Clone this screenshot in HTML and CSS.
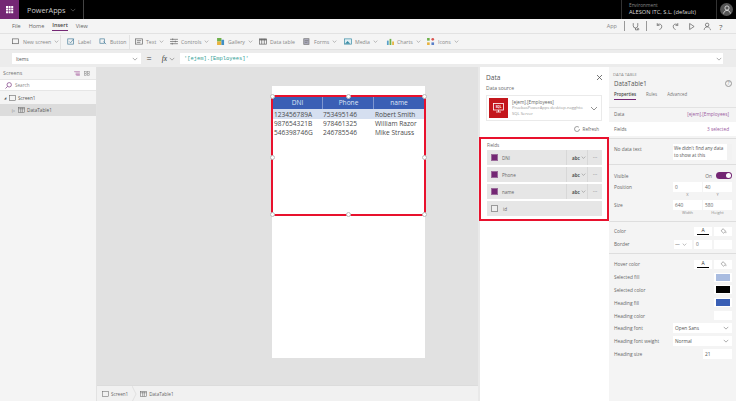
FILE: index.html
```html
<!DOCTYPE html>
<html lang="en">
<head>
<meta charset="utf-8">
<title>PowerApps</title>
<link rel="stylesheet" href="styles.css">
</head>
<body>
<svg width="0" height="0" class="defs"><defs>
<symbol id="chev" viewBox="0 0 8 5"><path d="M1 1l3 3 3-3" fill="none" stroke="currentColor" stroke-width=".8"/></symbol>
<symbol id="bucket" viewBox="0 0 8 7"><path d="M3.500 .8L6.500 3.800 4 6 1.200 3.300zM6.800 4.500v1.500" fill="none" stroke="#777" stroke-width=".7"/></symbol>
</defs></svg>
<div class="app">
  <header class="topbar">
    <div class="waffle"><svg width="9" height="9" viewBox="0 0 9 9" fill="#fff"><path d="M1 1h2v2H1zM3.600 1h2v2h-2zM6.200 1h2v2h-2zM1 3.600h2v2H1zM3.600 3.600h2v2h-2zM6.200 3.600h2v2h-2zM1 6.200h2v2H1zM3.600 6.200h2v2h-2zM6.200 6.200h2v2h-2z"/></svg></div>
    <div class="brand">PowerApps<svg class="chev"><use href="#chev"/></svg></div>
    <div class="env">
      <div class="env-label">Environment</div>
      <div class="env-name">ALESON ITC, S.L. (default)</div>
    </div>
    <div class="account"><div class="avatar"><svg width="8" height="9" viewBox="0 0 8 9" fill="none" stroke="#ddd" stroke-width=".9"><circle cx="4" cy="3" r="2.100"/><path d="M.6 8.600C1 6.400 2.400 5.400 4 5.400s3 1 3.400 3.200"/></svg></div></div>
  </header>

  <nav class="menubar">
    <span class="menu">File</span><span class="menu">Home</span><span class="menu active">Insert</span><span class="menu">View</span>
    <span class="spacer"></span>
    <span class="app-label">App</span>
    <span class="vsep"></span>
    <svg class="tool tool-first" viewBox="0 0 12 12" fill="none" stroke="#555" stroke-width=".9"><path d="M3 1.500v3.500a3 3 0 0 0 6 0V1.500M6 8v2.500h3"/><circle cx="9.500" cy="9.500" r="1"/></svg>
    <span class="vsep"></span>
    <svg class="tool" viewBox="0 0 12 12" fill="none" stroke="#555" stroke-width=".9"><path d="M3 1.500v3h3M3 4.500C4 3 5.500 2.500 7 3c2 .8 2.600 3 1.500 5L6 10.500"/></svg>
    <svg class="tool" viewBox="0 0 12 12" fill="none" stroke="#555" stroke-width=".9"><path d="M9 1.500v3H6M9 4.500C8 3 6.500 2.500 5 3c-2 .8-2.600 3-1.500 5L6 10.500"/></svg>
    <svg class="tool" viewBox="0 0 12 12" fill="none" stroke="#555" stroke-width=".9"><path d="M3.500 2l6 4-6 4z"/></svg>
    <svg class="tool" viewBox="0 0 12 12" fill="none" stroke="#555" stroke-width=".9"><circle cx="5.500" cy="3.800" r="2.300"/><path d="M1.500 10.500c.3-2.500 2-4 4-4s3 .8 3.600 2M9 9.500l1.500 1"/></svg>
    <span class="tool help-glyph">?</span>
  </nav>

  <div class="ribbon">
    <div class="rb rb-new"><svg class="ic" viewBox="0 0 9 8" fill="none" stroke="#666" stroke-width=".8"><rect x=".5" y="1" width="7" height="5.500"/></svg>New screen<svg class="chev"><use href="#chev"/></svg></div>
    <span class="rb-sep"></span>
    <div class="rb rb-label"><svg class="ic" viewBox="0 0 9 8" fill="none" stroke="#4a7f9c" stroke-width=".8"><rect x=".8" y="1" width="6.500" height="6"/><path d="M2.500 4l1.500 1.500L7.500 1"/></svg>Label</div>
    <div class="rb rb-button"><svg class="ic" viewBox="0 0 9 8" fill="none" stroke="#4a7f9c" stroke-width=".8"><rect x="1" y="1" width="5" height="5"/><path d="M5 4l3 3"/></svg>Button</div>
    <span class="rb-sep"></span>
    <div class="rb rb-text"><svg class="ic" viewBox="0 0 9 8" fill="none" stroke="#666" stroke-width=".8"><rect x=".5" y="1" width="8" height="6"/><path d="M2 3h5M2 5h4"/></svg>Text<svg class="chev"><use href="#chev"/></svg></div>
    <div class="rb rb-controls"><svg class="ic" viewBox="0 0 9 8" fill="none" stroke="#666" stroke-width=".8"><path d="M0 1.500h9M0 4h9M0 6.500h9M3 .5v2M6 3v2M2.500 5.500v2"/></svg>Controls<svg class="chev"><use href="#chev"/></svg></div>
    <div class="rb rb-gallery"><svg class="ic" viewBox="0 0 9 8"><path fill="#6fb04a" d="M0 0h5v4H0z"/><path fill="#e8b23c" d="M0 4h5v4H0z"/><path fill="#3f8fc4" d="M5 2h3v6H5z"/></svg>Gallery<svg class="chev"><use href="#chev"/></svg></div>
    <div class="rb rb-table"><svg class="ic" viewBox="0 0 9 8" fill="none" stroke="#666" stroke-width=".8"><rect x=".5" y="1" width="8" height="6"/><path d="M3 1v6M6 1v6" /><path d="M.5 2h8" stroke-width="1.400"/></svg>Data table</div>
    <div class="rb rb-forms"><svg class="ic" viewBox="0 0 9 8" fill="none" stroke="#777" stroke-width=".8"><rect x=".8" y=".8" width="6" height="6.500" fill="#aab"/><path d="M2 3h4M2 5h3"/></svg>Forms<svg class="chev"><use href="#chev"/></svg></div>
    <div class="rb rb-media"><svg class="ic" viewBox="0 0 9 8"><rect x=".5" y="1" width="8" height="6" fill="#dfeef3" stroke="#3a8ca5" stroke-width=".8"/><path d="M1 6.500l3-3 3 3z" fill="#3a8ca5"/></svg>Media<svg class="chev"><use href="#chev"/></svg></div>
    <div class="rb rb-charts"><svg class="ic" viewBox="0 0 9 8"><path fill="#5aa0c8" d="M1 3h2v5H1z"/><path fill="#6fb04a" d="M4 1h2v7H4z"/><path fill="#e8b23c" d="M7 4h2v4H7z"/></svg>Charts<svg class="chev"><use href="#chev"/></svg></div>
    <div class="rb rb-icons"><svg class="ic" viewBox="0 0 9 8"><path fill="#6fb04a" d="M0 0h3v3H0z"/><circle cx="6.500" cy="1.500" r="1.500" fill="#d9534f"/><path fill="#e8b23c" d="M0 5h3v3H0z"/><path fill="#5a7fc8" d="M5 5h3v3H5z"/></svg>Icons<svg class="chev"><use href="#chev"/></svg></div>
  </div>

  <div class="formula">
    <div class="prop-select">Items<svg class="chev"><use href="#chev"/></svg></div>
    <div class="equals">=</div>
    <div class="fx"><i>fx</i><svg class="chev"><use href="#chev"/></svg></div>
    <div class="expr"><code>'[ejem].[Employees]'</code><svg class="chev"><use href="#chev"/></svg></div>
  </div>

  <div class="workspace">
    <aside class="tree">
      <div class="tree-head"><span>Screens</span><svg class="tree-ic" viewBox="0 0 8 7" fill="none" stroke="#a45a9c" stroke-width=".9"><path d="M0 1h8M2 3h6M2 5h6M3 6.700h5"/></svg><svg class="tree-ic" viewBox="0 0 8 7" fill="none" stroke="#888" stroke-width=".7"><rect x=".5" y=".5" width="3" height="2.500"/><rect x="4.500" y=".5" width="3" height="2.500"/><rect x=".5" y="4" width="3" height="2.500"/><rect x="4.500" y="4" width="3" height="2.500"/></svg></div>
      <div class="search"><svg width="7" height="7" viewBox="0 0 7 7" fill="none" stroke="#8a4f90" stroke-width=".8"><circle cx="4.200" cy="2.800" r="2.200"/><path d="M2.600 4.400L.5 6.500"/></svg>Search</div>
      <div class="node node-screen"><span class="tri">◢</span><svg class="node-ic" viewBox="0 0 8 6" fill="none" stroke="#555" stroke-width=".6"><rect x=".4" y=".4" width="7" height="5.200"/></svg>Screen1</div>
      <div class="node node-table"><span class="tri2">▷</span><svg class="node-ic" viewBox="0 0 8 6" fill="none" stroke="#666" stroke-width=".6"><rect x=".4" y=".4" width="7" height="5.200"/><path d="M3 .4v5.200M5 .4v5.200M.4 1.600h7"/></svg>DataTable1</div>
    </aside>

    <div class="center">
      <main class="canvas">
        <div class="phone">
          <div class="selection">
            <span class="h h-tl"></span><span class="h h-tc"></span><span class="h h-tr"></span>
            <span class="h h-ml"></span><span class="h h-mr"></span>
            <span class="h h-bl"></span><span class="h h-bc"></span><span class="h h-br"></span>
            <div class="tbl-row tbl-head"><span>DNI</span><span>Phone</span><span>name</span></div>
            <div class="tbl-row tbl-sel"><span>123456789A</span><span>753495146</span><span>Robert Smith</span></div>
            <div class="tbl-row"><span>987654321B</span><span>978461325</span><span>William Razor</span></div>
            <div class="tbl-row"><span>546398746G</span><span>246785546</span><span>Mike Strauss</span></div>
          </div>
        </div>
      </main>
      <footer class="crumbs">
        <svg class="crumb-ic" viewBox="0 0 8 6" fill="none" stroke="#666" stroke-width=".6"><rect x=".4" y=".4" width="7" height="5.200"/></svg><span>Screen1</span>
        <svg class="crumb-arrow" viewBox="0 0 5 16" fill="none" stroke="#ddd" stroke-width=".8"><path d="M0 0l4 8-4 8"/></svg>
        <svg class="crumb-ic" viewBox="0 0 8 6" fill="none" stroke="#666" stroke-width=".6"><rect x=".4" y=".4" width="7" height="5.200"/><path d="M3 .4v5.200M5 .4v5.200M.4 1.600h7"/></svg><span>DataTable1</span>
      </footer>
    </div>

    <section class="data">
      <div class="data-title"><span>Data</span><svg width="7" height="7" viewBox="0 0 7 7" stroke="#555" stroke-width=".8"><path d="M1 1l5 5M6 1L1 6"/></svg></div>
      <div class="data-sub">Data source</div>
      <div class="source">
        <div class="source-ic"><svg width="11" height="10" viewBox="0 0 11 10" fill="none" stroke="#fff" stroke-width=".8"><rect x=".5" y=".5" width="10" height="6.500"/><path d="M3 9h5M5.500 7v2"/><text x="5.500" y="5" text-anchor="middle" class="sql">SQL</text></svg></div>
        <div class="source-text"><div>[ejem].[Employees]</div><div class="muted">PruebasPowerApps desktop-nagghto</div><div class="muted">SQL Server</div></div>
        <svg class="chev big"><use href="#chev"/></svg>
      </div>
      <div class="refresh"><svg width="6" height="6" viewBox="0 0 6 6" fill="none" stroke="#666" stroke-width=".6"><path d="M5.500 3A2.500 2.500 0 1 1 3 .5c1 0 1.600.5 2 1"/></svg>Refresh</div>
      <div class="fields">
        <div class="fields-label">Fields</div>
        <div class="field"><span class="check on"></span><span class="fname">DNI</span><span class="ftype">abc<svg class="chev"><use href="#chev"/></svg></span><span class="fmore">···</span></div>
        <div class="field"><span class="check on"></span><span class="fname">Phone</span><span class="ftype">abc<svg class="chev"><use href="#chev"/></svg></span><span class="fmore">···</span></div>
        <div class="field"><span class="check on"></span><span class="fname">name</span><span class="ftype">abc<svg class="chev"><use href="#chev"/></svg></span><span class="fmore">···</span></div>
        <div class="field"><span class="check"></span><span class="fname">id</span></div>
      </div>
    </section>

    <aside class="props">
      <div class="props-head">
        <div class="kind">DATA TABLE</div>
        <div class="ctl-name"><span>DataTable1</span><span class="help">?</span></div>
        <div class="tabs"><span class="tab active">Properties</span><span class="tab">Rules</span><span class="tab">Advanced</span></div>
      </div>
      <div class="link-row"><span>Data</span><span class="val">[ejem].[Employees]</span></div>
      <div class="link-row white"><span>Fields</span><span class="val">3 selected</span></div>

      <div class="group g-nodata">
        <div class="p-row"><span class="p-name">No data text</span><div class="textarea"><span>We didn't find any data to show at this</span><i class="scroll"></i></div></div>
      </div>
      <div class="group g-layout">
        <div class="p-row r-visible"><span class="p-name">Visible</span><span class="on">On</span><span class="toggle"></span></div>
        <div class="p-row r-pos"><span class="p-name">Position</span><div class="pair"><div class="num">0<small>X</small></div><div class="num">40<small>Y</small></div></div></div>
        <div class="p-row r-size"><span class="p-name">Size</span><div class="pair"><div class="num">640<small>Width</small></div><div class="num">580<small>Height</small></div></div></div>
      </div>
      <div class="group g-color">
        <div class="p-row"><span class="p-name">Color</span><div class="swatches"><span class="sw"><b class="a">A</b></span><span class="sw"><svg class="bucket"><use href="#bucket"/></svg></span></div></div>
        <div class="p-row"><span class="p-name">Border</span><div class="border-ctl"><span class="sel-mini">—<svg class="chev"><use href="#chev"/></svg></span><span class="in-mini">0</span><span class="sw"></span></div></div>
      </div>
      <div class="group g-last">
        <div class="p-row"><span class="p-name">Hover color</span><div class="swatches"><span class="sw"><b class="a">A</b></span><span class="sw"><svg class="bucket"><use href="#bucket"/></svg></span></div></div>
        <div class="p-row"><span class="p-name">Selected fill</span><span class="sw c-selfill"></span></div>
        <div class="p-row"><span class="p-name">Selected color</span><span class="sw c-black"></span></div>
        <div class="p-row"><span class="p-name">Heading fill</span><span class="sw c-blue"></span></div>
        <div class="p-row"><span class="p-name">Heading color</span><span class="sw"></span></div>
        <div class="p-row"><span class="p-name">Heading font</span><div class="wide-sel">Open Sans<svg class="chev"><use href="#chev"/></svg></div></div>
        <div class="p-row"><span class="p-name">Heading font weight</span><div class="wide-sel">Normal<svg class="chev"><use href="#chev"/></svg></div></div>
        <div class="p-row"><span class="p-name">Heading size</span><div class="size-in">21</div></div>
      </div>
    </aside>
  </div>
</div>
</body>
</html>
```

FILE: styles.css
```css
* { box-sizing: border-box; }
html, body { margin: 0; height: 100%; }
body { width: 736px; height: 401px; overflow: hidden; font-family: "Open Sans", sans-serif; font-size: 5px; color: #555; background: #f4f4f4; }
.defs { position: absolute; }
.app { display: flex; flex-direction: column; width: 736px; height: 401px; }
.chev { width: 6px; height: 4px; color: #777; flex: none; }

.topbar { display: flex; height: 19px; background: #000; flex: none; }
.waffle { width: 19px; background: #742774; display: flex; align-items: center; justify-content: center; }
.brand { width: 65px; padding-left: 8px; display: flex; align-items: center; gap: 4px; color: #ccc; font-size: 7.300px; border-right: 1px solid #444; }
.env { margin-left: auto; width: 95px; padding: 2px 0 0 7px; border-left: 1px solid #333; }
.env-label { font-size: 4.800px; line-height: 7px; color: #888; }
.env-name { font-size: 5.700px; line-height: 7px; color: #ddd; white-space: nowrap; }
.account { width: 20px; border-left: 1px solid #333; display: flex; align-items: center; justify-content: center; }
.avatar { width: 13px; height: 13px; border-radius: 50%; background: #555; display: flex; align-items: center; justify-content: center; }

.menubar { display: flex; align-items: center; height: 15px; flex: none; padding-left: 12px; background: #f4f4f4; border-bottom: 1px solid #e2e2e2; font-size: 5.500px; }
.menu { margin-right: 8px; padding-bottom: 1px; color: #666; }
.menu.active { font-weight: 600; color: #444; border-bottom: 1px solid #742774; }
.spacer { flex: 1; }
.app-label { margin-right: 7px; color: #888; }
.vsep { width: 1px; height: 10px; background: #999; }
.tool { width: 9px; height: 9px; margin-right: 7px; flex: none; }
.tool-first { margin: 0 6px; }
.vsep + .tool:not(.tool-first) { margin-left: 8px; }
.help-glyph { margin-right: 11px; width: 6px; font-size: 8px; line-height: 9px; color: #555; }

.ribbon { display: flex; align-items: center; height: 16px; flex: none; padding-left: 12px; background: #f4f4f4; border-bottom: 1px solid #e2e2e2; font-size: 5.200px; color: #888; }
.rb { display: flex; align-items: center; gap: 3px; flex: none; }
.ic { width: 8px; height: 7px; flex: none; }
.rb .chev { width: 5px; height: 3px; }
.rb-sep { width: 1px; height: 14px; background: #e2e2e2; flex: none; }
.rb-new { width: 48px; }
.rb-label { width: 32px; margin-left: 6px; }
.rb-button { width: 30px; }
.rb-text { width: 35px; margin-left: 5px; }
.rb-controls { width: 47px; }
.rb-gallery { width: 42px; }
.rb-table { width: 44px; }
.rb-forms { width: 41px; }
.rb-media { width: 42px; }
.rb-charts { width: 41px; }
.rb-icons { width: 40px; }

.formula { display: flex; align-items: center; height: 17px; flex: none; padding: 0 13px 0 12px; background: #ececec; }
.prop-select { width: 129px; height: 11px; background: #fff; display: flex; align-items: center; justify-content: space-between; padding: 0 3px 0 4px; font-size: 4.800px; }
.equals { width: 16px; text-align: center; font-size: 9px; line-height: 11px; color: #444; }
.fx { width: 23px; height: 11px; display: flex; align-items: center; justify-content: center; gap: 2px; font-family: "Liberation Serif", serif; font-size: 7.500px; color: #333; }
.expr { flex: 1; height: 11px; background: #fff; display: flex; align-items: center; justify-content: space-between; padding: 0 1px 0 4px; }
.expr code { font-family: "Liberation Mono", monospace; font-size: 5.400px; color: #2f9e94; }

.workspace { flex: 1; display: flex; min-height: 0; }
.tree { width: 97px; flex: none; background: #f4f4f4; border-right: 1px solid #e2e2e2; }
.tree-head { display: flex; align-items: center; height: 12px; padding: 0 6px 0 3px; gap: 4px; font-size: 5.300px; color: #777; }
.tree-head span { flex: 1; }
.tree-ic { width: 6px; height: 5px; }
.search { display: flex; align-items: center; gap: 3px; height: 12px; padding-left: 5px; background: #fff; border: 1px solid #e6e6e6; border-width: 1px 0; font-size: 4.600px; color: #888; }
.node { display: flex; align-items: center; height: 12px; font-size: 4.700px; color: #555; }
.node-screen { margin-top: 1px; padding-left: 4px; }
.node-table { padding-left: 12px; background: #dcdcdc; }
.tri { font-size: 3px; margin-right: 3px; }
.tri2 { font-size: 4px; margin-right: 3px; }
.node-ic { width: 7px; height: 6px; margin-right: 2px; }

.center { flex: 1; display: flex; flex-direction: column; min-width: 0; border-right: 2px solid #e9e9e9; }
.canvas { flex: 1; background: #e1e1e1; padding: 19px 0 0 175px; min-height: 0; }
.phone { width: 153px; height: 272px; background: #fff; padding-top: 9px; }
.selection { position: relative; height: 121px; width: 155px; margin-left: -1px; border: 2px solid #e8112d; background: #fff; }
.h { position: absolute; width: 5px; height: 5px; border: 1px solid #bbb; border-radius: 50%; background: #fff; }
.h-tl { left: -3px; top: -3px; } .h-tc { left: 73px; top: -3px; } .h-tr { right: -3px; top: -3px; }
.h-ml { left: -3px; top: 58px; } .h-mr { right: -3px; top: 58px; }
.h-bl { left: -3px; bottom: -3px; } .h-bc { left: 73px; bottom: -3px; } .h-br { right: -3px; bottom: -3px; }
.tbl-row { display: grid; grid-template-columns: 49px 51px 1fr; height: 9px; align-items: center; font-size: 6.600px; color: #4a4a4a; }
.tbl-row span { padding-left: 1px; white-space: nowrap; }
.tbl-row span:nth-child(2) { padding-left: 1px; }
.tbl-row span:nth-child(3) { padding-left: 2px; }
.tbl-head { height: 12px; background: #3a5fb5; color: #dfe6f6; }
.tbl-head span { text-align: center; height: 12px; line-height: 12px; padding: 0; border-left: 1px solid #7f97d0; }
.tbl-head span:first-child { border-left: 0; }
.tbl-head span:nth-child(3) { padding: 0; }
.tbl-sel { height: 10px; background: #d5dff0; }
.crumbs { height: 16px; flex: none; display: flex; align-items: center; padding-left: 5px; background: #f1f1f1; border-top: 1px solid #dcdcdc; font-size: 4.600px; color: #666; }
.crumb-ic { width: 7px; height: 6px; margin-right: 2px; }
.crumb-arrow { width: 5px; height: 16px; margin: 0 3px 0 4px; }

.data { width: 129px; flex: none; background: #fff; padding-top: 7px; }
.data-title { display: flex; justify-content: space-between; align-items: center; height: 7px; padding: 0 6px 0 6px; font-size: 6.600px; color: #555; }
.data-sub { margin: 4px 0 0 6px; height: 7px; line-height: 7px; font-size: 5px; color: #666; }
.source { display: flex; align-items: center; margin: 3px 7px 0 6px; height: 26px; border: 1px solid #eaeaea; padding-left: 2px; }
.source-ic { width: 19px; height: 20px; background: #c4161c; display: flex; align-items: center; justify-content: center; flex: none; }
.sql { font-family: "Open Sans", sans-serif; font-size: 3px; font-weight: 700; fill: #fff; stroke: none; }
.source-text { flex: 1; min-width: 0; padding-left: 4px; font-size: 4.700px; line-height: 6.300px; color: #666; white-space: nowrap; }
.muted { color: #999; font-size: 4.100px; }
.chev.big { width: 8px; height: 5px; margin: 0 3px; }
.refresh { display: flex; justify-content: flex-end; align-items: center; gap: 3px; height: 7px; margin: 4px 10px 0 0; font-size: 4.600px; color: #666; }
.fields { margin-top: 5px; height: 84px; width: 130px; margin-left: -1px; border: 2px solid #e8112d; padding: 3px 5px 0 6px; }
.fields-label { height: 8px; line-height: 7px; font-size: 4.600px; color: #666; }
.field { display: flex; align-items: center; height: 15px; margin-bottom: 2px; background: #e6e6e6; font-size: 4.600px; color: #666; }
.field:last-child { margin: 0; }
.check { width: 7px; height: 7px; margin: 0 5px 0 4px; border: 1px solid #999; background: #eee; flex: none; }
.check.on { background: #742774; border-color: #9a6a9a; }
.fname { flex: 1; }
.ftype { width: 21px; height: 15px; display: flex; align-items: center; gap: 1px; padding-left: 5px; border-left: 1px solid #d8d8d8; font-weight: 700; font-size: 4.400px; color: #555; }
.ftype .chev { width: 5px; height: 3px; }
.fmore { width: 15px; height: 15px; line-height: 14px; text-align: center; border-left: 1px solid #d8d8d8; font-size: 6px; }

.props { width: 127px; flex: none; background: #f4f4f4; }
.props-head { height: 41px; padding: 5px 0 0 4px; border-bottom: 1px solid #e2e2e2; }
.kind { font-size: 4.200px; line-height: 6px; color: #888; }
.ctl-name { display: flex; justify-content: space-between; align-items: center; height: 11px; padding: 0 4px 0 1px; font-size: 6.200px; color: #555; }
.help { width: 7px; height: 7px; border: 1px solid #999; border-radius: 50%; font-size: 4.500px; line-height: 5px; text-align: center; color: #888; }
.tabs { display: flex; margin-top: 2px; font-size: 4.400px; color: #777; }
.tab { margin-right: 10px; line-height: 7px; padding-bottom: 1px; }
.tab.active { margin-left: 1px; color: #444; font-weight: 600; border-bottom: 1px solid #742774; }
.link-row { display: flex; justify-content: space-between; align-items: center; height: 14px; padding: 0 7px 3px 5px; font-size: 4.700px; color: #666; }
.link-row.white { padding: 0 7px 0 5px; background: #fff; }
.val { color: #9a5aa0; }
.group { border-bottom: 1px solid #dedede; padding: 0 4px 0 5px; }
.p-row { display: flex; align-items: center; justify-content: space-between; font-size: 4.800px; color: #666; height: 12.800px; }
.g-nodata { margin-top: 2px; border-top: 1px solid #dedede; height: 27px; padding-top: 5px; }
.g-nodata .p-row { height: 16px; align-items: flex-start; }
.g-nodata .p-name { line-height: 10px; }
.p-name { white-space: nowrap; }
.textarea { position: relative; width: 59px; height: 16px; background: #fff; padding: 1px 7px 0 1px; font-size: 4.600px; line-height: 6.500px; color: #555; }
.scroll { position: absolute; right: 0; top: 0; bottom: 0; width: 5px; background: #f2f2f2; }
.g-layout { height: 57px; padding-top: 4px; }
.r-visible { height: 13px; justify-content: flex-start; }
.r-visible .p-name { flex: 1; }
.on { margin-right: 4px; }
.toggle { position: relative; width: 16px; height: 7px; border-radius: 4px; background: #742774; }
.toggle::after { content: ""; position: absolute; right: 1px; top: 1px; width: 5px; height: 5px; border-radius: 50%; background: #fff; }
.r-pos { height: 18px; align-items: flex-start; }
.r-size { height: 18px; align-items: flex-start; }
.p-row.r-pos .p-name, .p-row.r-size .p-name { line-height: 10px; }
.pair { display: flex; gap: 1px; }
.num { position: relative; width: 29px; height: 10px; background: #fff; padding-left: 2px; line-height: 10px; font-size: 4.800px; }
.num small { position: absolute; left: 0; right: 0; top: 10px; text-align: center; font-size: 4px; line-height: 6px; color: #888; }
.g-color { height: 32px; padding-top: 3px; }
.swatches { display: flex; gap: 2px; }
.sw { display: block; width: 18px; height: 9px; background: #fff; position: relative; flex: none; text-align: center; }
.sw b { font-weight: 400; font-size: 5px; line-height: 7px; display: block; }
.sw .a { border-bottom: 1px solid #000; margin: 0 3px; height: 8px; color: #333; }
.bucket { display: block; width: 7px; height: 6px; margin: 1px auto 0; }
.border-ctl { display: flex; gap: 2px; }
.sel-mini { width: 18px; height: 9px; background: #fff; display: flex; align-items: center; gap: 2px; padding-left: 1px; }
.sel-mini .chev { width: 5px; height: 3px; }
.in-mini { width: 18px; height: 9px; background: #fff; padding-left: 2px; line-height: 9px; }
.g-last { border: 0; padding-top: 4px; }
.c-selfill { background: #a9bce0; border: 1px solid #fff; border-width: 1px 2px; }
.c-black { border: 1px solid #fff; border-width: 1px 2px; background: #000; }
.c-blue { border: 1px solid #fff; border-width: 1px 2px; background: #3a5fb5; }
.wide-sel { width: 59px; height: 10px; background: #fff; display: flex; align-items: center; justify-content: space-between; padding: 0 3px 0 2px; font-size: 4.800px; color: #555; }
.size-in { width: 29px; height: 10px; background: #fff; padding-left: 2px; line-height: 10px; color: #555; }
```
